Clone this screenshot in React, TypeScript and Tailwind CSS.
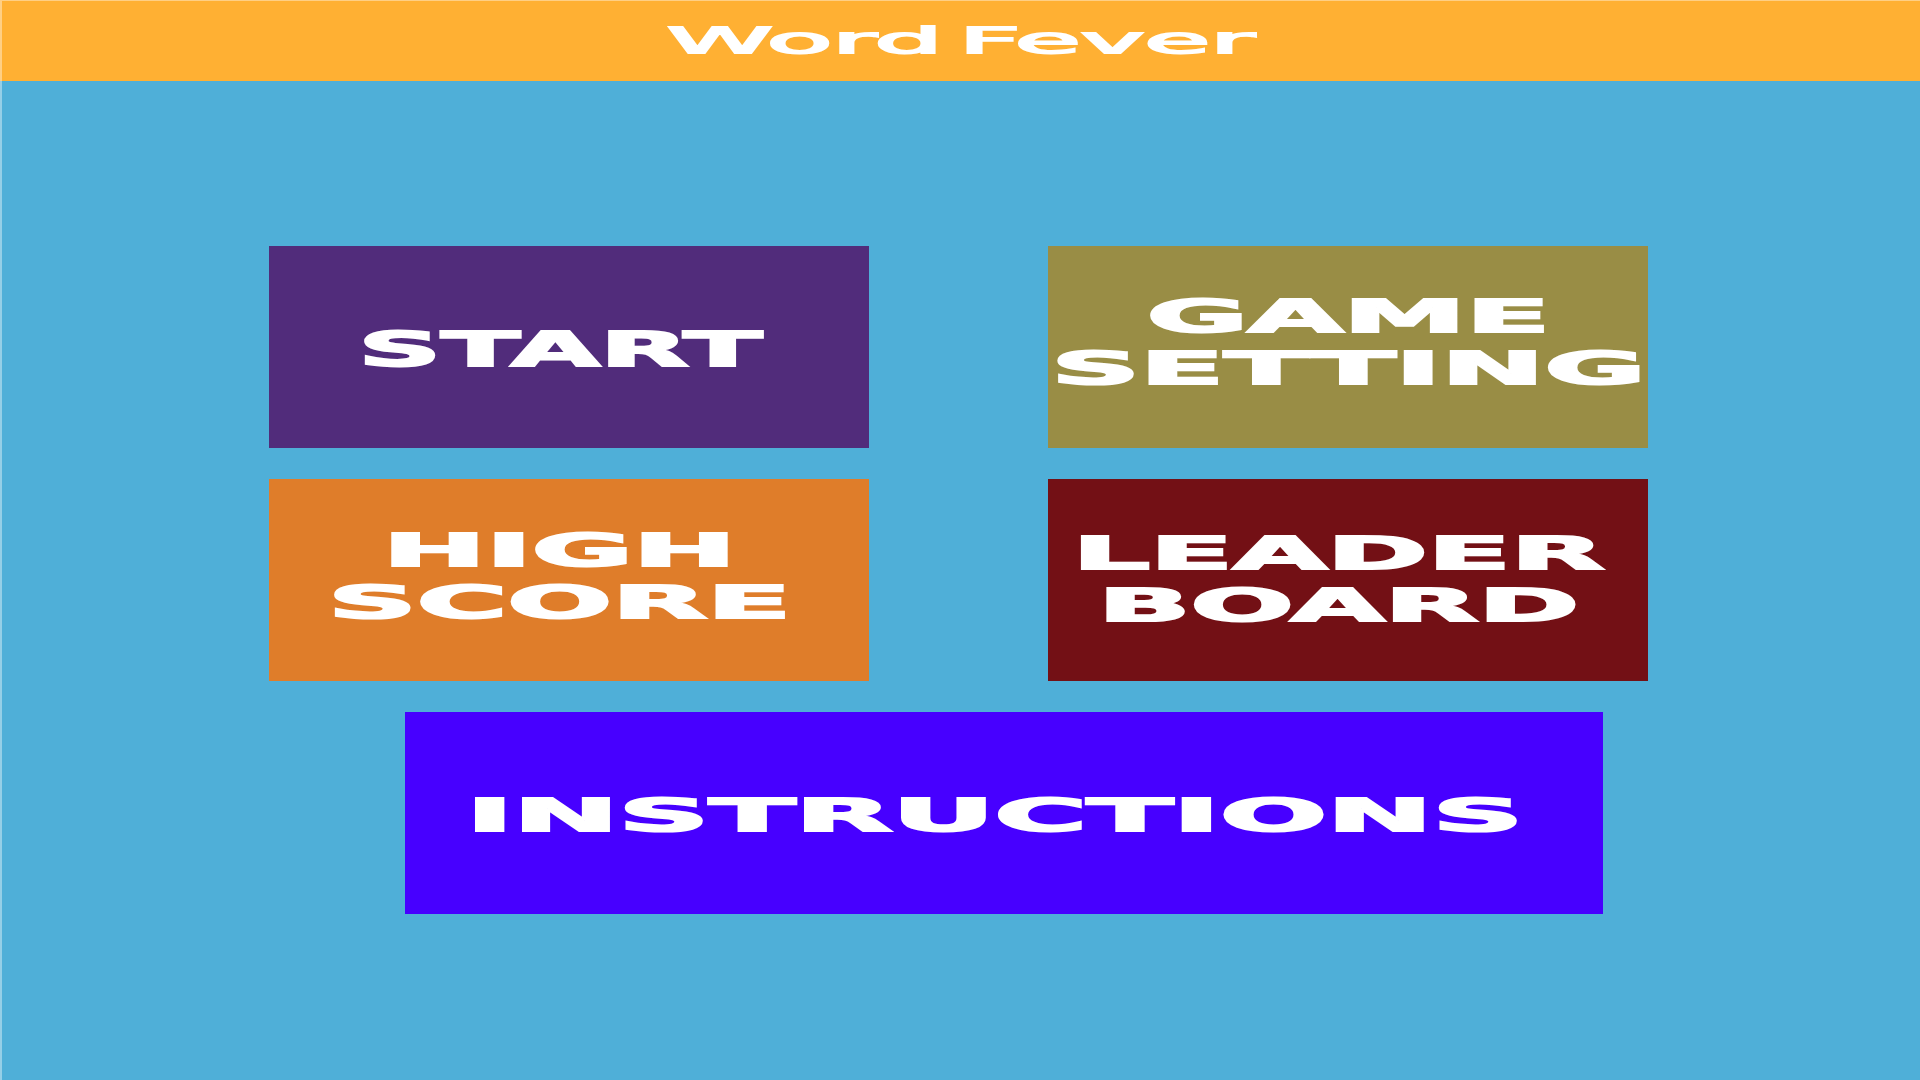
import { FunctionComponent } from "react"

type MenuItem = {
    id: string;
    lines: string[];
    bg: string;
    pad: string;
    text: string;
}

const items: MenuItem[] = [
    { id: "start", lines: ["START"], bg: "bg-[#512c7b]", pad: "pr-[18px] pt-[4px]", text: "text-[48px] scale-x-[2.4]" },
    { id: "settings", lines: ["GAME", "SETTING"], bg: "bg-[#998d45]", pad: "pb-[8px]", text: "text-[45px] scale-x-[2.74]" },
    { id: "highscore", lines: ["HIGH", "SCORE"], bg: "bg-[#df7d2a]", pad: "pr-[18px] pb-[6px]", text: "text-[45px] scale-x-[2.74]" },
    { id: "leaderboard", lines: ["LEADER", "BOARD"], bg: "bg-[#731015]", pad: "pr-[20px]", text: "text-[45px] scale-x-[2.7]" },
]

const instructions: MenuItem = {
    id: "instructions",
    lines: ["INSTRUCTIONS"],
    bg: "bg-[#4700ff]",
    pad: "pr-[18px] pt-[6px]",
    text: "text-[45px] scale-x-[2.8]",
}

const MenuButton: FunctionComponent<{ item: MenuItem; className?: string }> = ({ item, className }) => (
    <button
        className={`flex items-center justify-center h-[202px] ${item.bg} ${item.pad} ${className ?? ""}`}
    >
        <span
            className={`inline-block font-bold leading-[52px] text-white text-center [-webkit-text-stroke:2px_white] ${item.text}`}
            style={{ fontFamily: '"DejaVu Sans", "Liberation Sans", sans-serif' }}
        >
            {item.lines.map(line => <span key={line} className="block">{line}</span>)}
        </span>
    </button>
)

export default function App() {
    return (
        <div className="flex flex-col w-[1920px] h-[1080px] overflow-hidden">
            <header className="flex items-center justify-center h-[81px] shrink-0 bg-[#ffb033] border-l-2 border-t border-white/40">
                <h1
                    className="inline-block text-[36px] font-normal leading-none text-white scale-x-[2.98] [word-spacing:-6px] [-webkit-text-stroke:1.8px_white]"
                    style={{ fontFamily: '"DejaVu Sans", "Liberation Sans", sans-serif' }}
                >
                    Word Fever
                </h1>
            </header>

            <main className="flex-1 bg-[#4fafd8] border-l-2 border-white/40 pt-[165px] pl-[267px]">
                <div className="grid grid-cols-[600px_600px] gap-x-[179px] gap-y-[31px]">
                    {items.map(item => <MenuButton key={item.id} item={item} />)}
                </div>
                <div className="mt-[31px] ml-[136px] w-[1198px]">
                    <MenuButton className="w-full" item={instructions} />
                </div>
            </main>
        </div>
    )
}
